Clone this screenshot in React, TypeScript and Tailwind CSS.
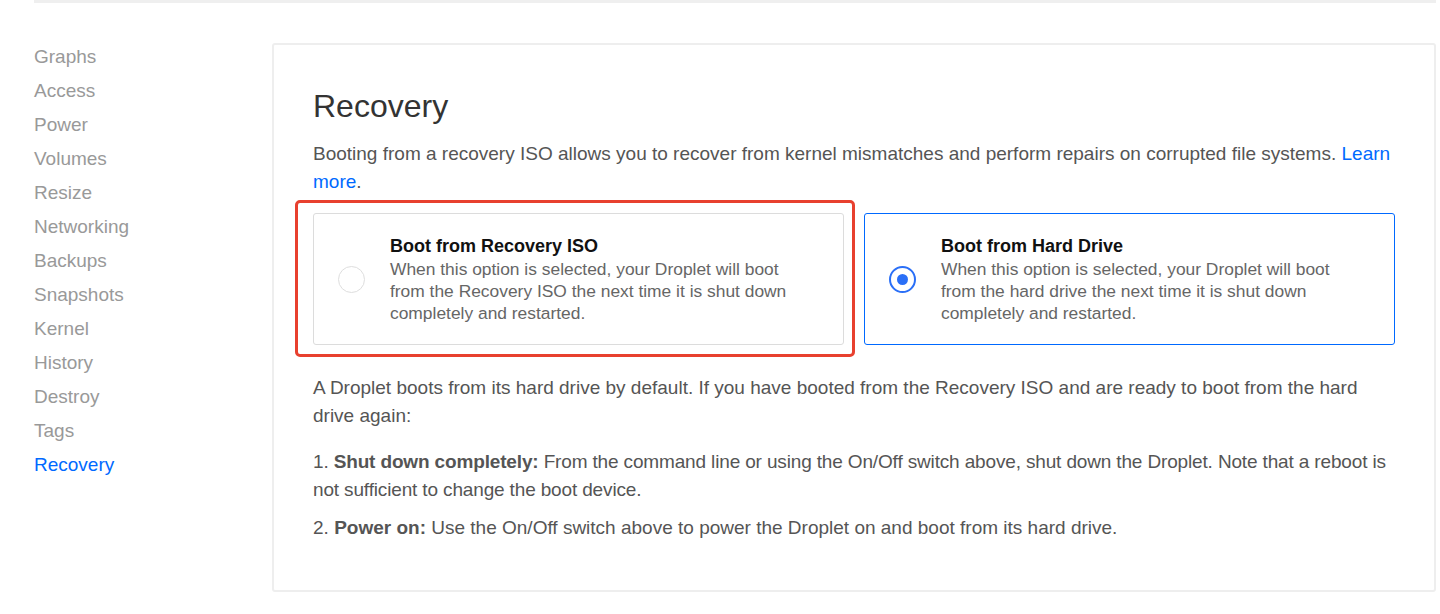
const navItems = [
  "Graphs",
  "Access",
  "Power",
  "Volumes",
  "Resize",
  "Networking",
  "Backups",
  "Snapshots",
  "Kernel",
  "History",
  "Destroy",
  "Tags",
  "Recovery",
];

interface BootOptionProps {
  title: string;
  device: string;
  selected: boolean;
}

function BootOption({ title, device, selected }: BootOptionProps) {
  return (
    <div
      className={`flex items-center rounded-[3px] bg-white pl-[24px] pr-[44px] py-[20px] ${
        selected ? "border-[1.5px] border-[#0069ff]" : "border border-[#dcdcdc]"
      }`}
    >
      <div className="w-[52px] shrink-0">
        {selected ? (
          <div className="flex h-[27px] w-[27px] items-center justify-center rounded-full border-2 border-[#2a6ff7]">
            <div className="h-[11px] w-[11px] rounded-full bg-[#2a6ff7]" />
          </div>
        ) : (
          <div className="h-[27px] w-[27px] rounded-full border border-[#dedede]" />
        )}
      </div>
      <div>
        <div className="text-[18px] font-bold leading-[24px] text-[#111]">{title}</div>
        <div className="text-[17.4px] leading-[22px] text-[#666]">
          When this option is selected, your Droplet will boot from the {device} the next time it is shut
          down completely and restarted.
        </div>
      </div>
    </div>
  );
}

export default function App() {
  return (
    <div className="min-h-[614px] bg-white font-['Liberation_Sans',Arial,sans-serif]">
      <div className="ml-[34px] mr-[4px] h-[3px] bg-[#efefef]" />
      <div className="flex pt-[40px] pl-[34px] pr-[4px]">
        <nav className="w-[238px] shrink-0 -mt-[3px]">
          {navItems.map((item) => (
            <div
              key={item}
              className={`text-[19px] leading-[34px] ${
                item === "Recovery" ? "text-[#0069ff]" : "text-[#999]"
              }`}
            >
              {item}
            </div>
          ))}
        </nav>
        <section className="flex-1 rounded-[3px] border-2 border-[#eeeeee] px-[39px] pt-[41px] pb-[48px]">
          <h1 className="text-[32px] font-normal leading-[40px] text-[#333]">Recovery</h1>
          <p className="mt-[14px] text-[19px] leading-[28px] text-[#555]">
            Booting from a recovery ISO allows you to recover from kernel mismatches and perform repairs on
            corrupted file systems. <span className="text-[#0069ff]">Learn more</span>.
          </p>
          <div className="relative mt-[17px] grid grid-cols-2 gap-[20px]">
            <BootOption title="Boot from Recovery ISO" device="Recovery ISO" selected={false} />
            <BootOption title="Boot from Hard Drive" device="hard drive" selected />
            <div className="pointer-events-none absolute top-[-13px] left-[-18px] h-[157px] w-[560px] rounded-[5px] border-[3px] border-[#e8402f]" />
          </div>
          <p className="mt-[29px] text-[19px] leading-[28px] text-[#555]">
            A Droplet boots from its hard drive by default. If you have booted from the Recovery ISO and are ready
            to boot from the hard drive again:
          </p>
          <p className="mt-[18px] text-[19px] leading-[28px] tracking-[-0.15px] text-[#555]">
            1. <span className="font-bold">Shut down completely:</span> From the command line or using the On/Off
            switch above, shut down the Droplet. Note that a reboot is not sufficient to change the boot device.
          </p>
          <p className="mt-[10px] text-[19px] leading-[28px] text-[#555]">
            2. <span className="font-bold">Power on:</span> Use the On/Off switch above to power the Droplet on and
            boot from its hard drive.
          </p>
        </section>
      </div>
    </div>
  );
}
